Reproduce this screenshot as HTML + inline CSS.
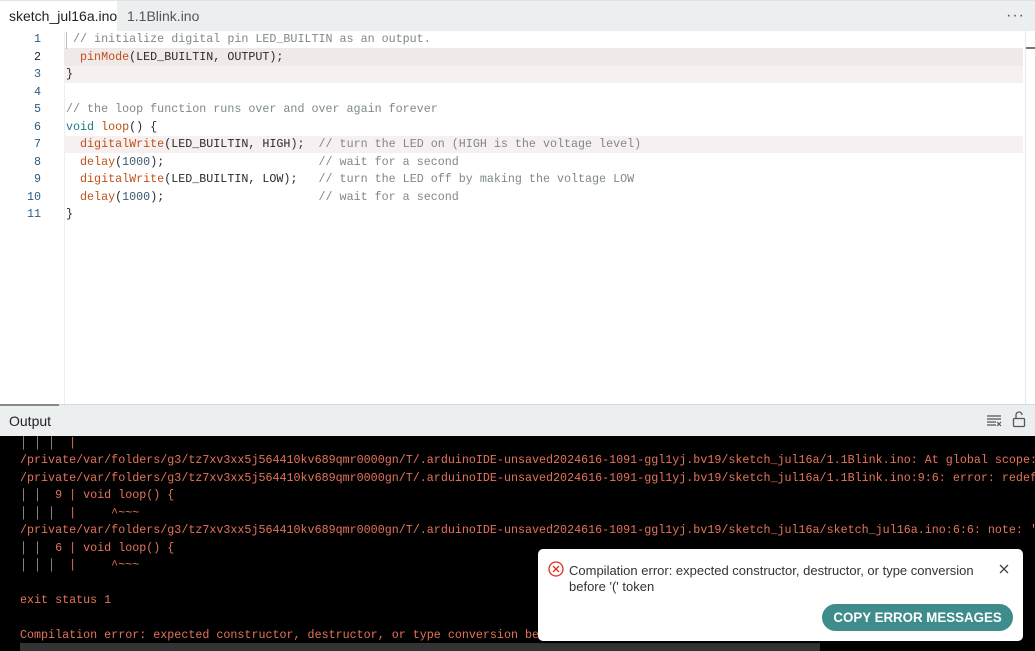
<!DOCTYPE html>
<html><head><meta charset="utf-8"><style>
*{margin:0;padding:0;box-sizing:border-box}
body{width:1035px;height:651px;overflow:hidden;background:#fff;font-family:"Liberation Sans",sans-serif;position:relative}
.tabs{position:absolute;left:0;top:0;width:1035px;height:31px;background:#eceff0;border-top:1px solid #e0e3e4}
.tab{position:absolute;top:0;height:31px;line-height:31px;font-size:14px;color:#222}
.mono{font-family:"Liberation Mono",monospace;font-size:11.7px;white-space:pre}
.ln{position:absolute;left:0;width:41px;text-align:right;color:#2b5d84}
.code{position:absolute;left:66px;color:#2a2a2a}
.hl{position:absolute;left:64px;right:12px;height:17.5px}
.f{color:#c0501a}.c{color:#7f888b}.k{color:#1f7a8c}.n{color:#3d5a6c}
.out{position:absolute;left:0;top:436px;width:1035px;height:215px;background:#000}
.o{position:absolute;left:20px;color:#e5735a}
.g{color:#9a9a9a}
</style></head><body>
<div class="tabs">
<div class="tab" style="left:0;width:117px;background:#fff;padding-left:9px">sketch_jul16a.ino</div>
<div class="tab" style="left:127px;color:#555">1.1Blink.ino</div>
<div style="position:absolute;right:10px;top:6px;font-size:16px;color:#555;letter-spacing:1px">···</div>
</div>
<div style="position:absolute;left:64px;top:31px;width:1px;height:373px;background:#eee"></div>
<div style="position:absolute;left:1025px;top:31px;width:1px;height:373px;background:#e8e8e8"></div>
<div style="position:absolute;left:1026px;top:47px;width:9px;height:2px;background:#777"></div>
<div class="hl" style="top:48px;background:#efe9e8"></div>
<div class="hl" style="top:65.5px;background:#f7f0f0"></div>
<div class="hl" style="top:135.5px;background:#f7f0f0"></div>
<div style="position:absolute;left:66px;top:32px;width:1px;height:17px;background:#bbb"></div>
<div class="mono">
<div class="ln" style="top:32px">1</div><div class="ln" style="top:49.5px;color:#123">2</div><div class="ln" style="top:67px">3</div><div class="ln" style="top:84.5px">4</div><div class="ln" style="top:102px">5</div><div class="ln" style="top:119.5px">6</div><div class="ln" style="top:137px">7</div><div class="ln" style="top:154.5px">8</div><div class="ln" style="top:172px">9</div><div class="ln" style="top:189.5px">10</div><div class="ln" style="top:207px">11</div>
<div class="code" style="top:32px"><span class="c"> // initialize digital pin LED_BUILTIN as an output.</span></div>
<div class="code" style="top:49.5px">  <span class="f">pinMode</span>(LED_BUILTIN, OUTPUT);</div>
<div class="code" style="top:67px">}</div>
<div class="code" style="top:102px"><span class="c">// the loop function runs over and over again forever</span></div>
<div class="code" style="top:119.5px"><span class="k">void</span> <span class="f">loop</span>() {</div>
<div class="code" style="top:137px">  <span class="f">digitalWrite</span>(LED_BUILTIN, HIGH);  <span class="c">// turn the LED on (HIGH is the voltage level)</span></div>
<div class="code" style="top:154.5px">  <span class="f">delay</span>(<span class="n">1000</span>);                      <span class="c">// wait for a second</span></div>
<div class="code" style="top:172px">  <span class="f">digitalWrite</span>(LED_BUILTIN, LOW);   <span class="c">// turn the LED off by making the voltage LOW</span></div>
<div class="code" style="top:189.5px">  <span class="f">delay</span>(<span class="n">1000</span>);                      <span class="c">// wait for a second</span></div>
<div class="code" style="top:207px">}</div>
</div>
<div style="position:absolute;left:0;top:404px;width:1035px;height:32px;background:#eceff0;border-top:1px solid #d5d8d9"></div>
<div style="position:absolute;left:0;top:404px;width:59px;height:2px;background:#888"></div>
<div style="position:absolute;left:9px;top:413px;font-size:14px;color:#222">Output</div>
<svg style="position:absolute;left:986px;top:414px" width="16" height="14"><g stroke="#555" stroke-width="1.2"><path d="M1 2h14M1 5h14M1 8h9M1 11h9M11 8l4 4M15 8l-4 4"/></g></svg>
<svg style="position:absolute;left:1012px;top:411px" width="14" height="17"><g fill="none" stroke="#555" stroke-width="1.3"><path d="M4 7V4a3 3 0 0 1 6 0"/><rect x="1.5" y="7.5" width="11" height="8" rx="1"/></g></svg>
<div class="out mono">
<div class="o" style="top:0px"><span class="g">│ │ │</span>  |</div>
<div class="o" style="top:17px">/private/var/folders/g3/tz7xv3xx5j564410kv689qmr0000gn/T/.arduinoIDE-unsaved2024616-1091-ggl1yj.bv19/sketch_jul16a/1.1Blink.ino: At global scope:</div>
<div class="o" style="top:34.5px">/private/var/folders/g3/tz7xv3xx5j564410kv689qmr0000gn/T/.arduinoIDE-unsaved2024616-1091-ggl1yj.bv19/sketch_jul16a/1.1Blink.ino:9:6: error: redefinition</div>
<div class="o" style="top:52px"><span class="g">│ │</span>  9 | void loop() {</div>
<div class="o" style="top:69.5px"><span class="g">│ │ │</span>  |     ^~~~</div>
<div class="o" style="top:87px">/private/var/folders/g3/tz7xv3xx5j564410kv689qmr0000gn/T/.arduinoIDE-unsaved2024616-1091-ggl1yj.bv19/sketch_jul16a/sketch_jul16a.ino:6:6: note: 'void</div>
<div class="o" style="top:104.5px"><span class="g">│ │</span>  6 | void loop() {</div>
<div class="o" style="top:122px"><span class="g">│ │ │</span>  |     ^~~~</div>
<div class="o" style="top:157px">exit status 1</div>
<div class="o" style="top:192px">Compilation error: expected constructor, destructor, or type conversion before '(' token</div>
<div style="position:absolute;left:20px;top:207px;width:800px;height:8px;background:#333"></div>
</div>
<div style="position:absolute;left:538px;top:549px;width:485px;height:92px;background:#fff;border-radius:5px;box-shadow:0 1px 4px rgba(0,0,0,.3)">
<svg style="position:absolute;left:10px;top:12px" width="16" height="16"><g fill="none" stroke="#d93025" stroke-width="1.3"><circle cx="8" cy="8" r="7"/><path d="M5 5l6 6M11 5l-6 6"/></g></svg>
<div style="position:absolute;left:31px;top:14px;width:420px;font-size:13px;line-height:16px;color:#333">Compilation error: expected constructor, destructor, or type conversion before '(' token</div>
<svg style="position:absolute;left:461px;top:15px" width="10" height="10"><path d="M1 1l8 8M9 1l-8 8" stroke="#444" stroke-width="1.3"/></svg>
<div style="position:absolute;left:284px;top:55px;width:191px;height:27px;border-radius:14px;background:#3e8c8c;color:#fff;font-weight:bold;font-size:14px;line-height:27px;text-align:center;white-space:nowrap"><span style="display:inline-block;transform:scaleX(0.95)">COPY ERROR MESSAGES</span></div>
</div>
</body></html>
